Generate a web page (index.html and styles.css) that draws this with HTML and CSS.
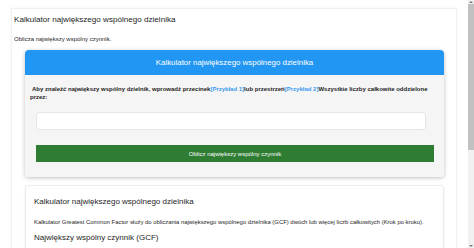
FILE: index.html
```html
<!DOCTYPE html>
<html lang="pl">
<head>
    <meta charset="UTF-8">
    <meta name="viewport" content="width=device-width, initial-scale=1.0">
    <title>Kalkulator największego wspólnego dzielnika</title>
    <link rel="stylesheet" href="styles.css">
</head>
<body>
    <div class="viewport">
        <div class="page">
            <h1 class="page-title">Kalkulator największego wspólnego dzielnika</h1>
            <p class="lead">Oblicza największy wspólny czynnik.</p>

            <div class="calc-card">
                <div class="calc-header">Kalkulator największego wspólnego dzielnika</div>
                <div class="calc-body">
                    <p class="hint">Aby znaleźć największy wspólny dzielnik, wprowadź przecinek<a href="#">[Przykład 1]</a>lub przestrzeń<a href="#">[Przykład 2]</a>Wszystkie liczby całkowite oddzielone przez:</p>
                    <input class="numbers" type="text">
                    <button class="calc-btn">Oblicz największy wspólny czynnik</button>
                </div>
            </div>

            <div class="info-card">
                <h2>Kalkulator największego wspólnego dzielnika</h2>
                <p>Kalkulator Greatest Common Factor służy do obliczania największego wspólnego dzielnika (GCF) dwóch lub więcej liczb całkowitych (Krok po kroku).</p>
                <h2>Największy wspólny czynnik (GCF)</h2>
                <p>Największy wspólny czynnik to największa liczba całkowita, która dzieli wszystkie podane liczby bez reszty.</p>
                <p>Na przykład największy wspólny czynnik liczb 12 i 18 wynosi 6.</p>
            </div>
        </div>
    </div>
    <div class="scrollbar">
        <span class="arrow up"></span>
        <span class="thumb"></span>
        <span class="arrow down"></span>
    </div>
</body>
</html>
```

FILE: styles.css
```css
* {
    margin: 0;
    padding: 0;
    box-sizing: border-box;
}

html,
body {
    height: 100%;
}

body {
    display: flex;
    overflow: hidden;
    font-family: 'Liberation Sans', Arial, sans-serif;
    background: #fff;
    color: #1e1e1e;
}

.viewport {
    flex: 1;
    overflow: hidden;
    padding: 8px 11px 8px 11px;
}

/* fake scrollbar strip */
.scrollbar {
    width: 6px;
    display: flex;
    flex-direction: column;
    align-items: center;
    background: #f1f1f1;
}

.thumb {
    width: 6px;
    height: 146px;
    background: #c1c1c1;
}

.arrow {
    width: 0;
    height: 0;
    border-left: 2px solid transparent;
    border-right: 2px solid transparent;
    margin: 1px 0;
}

.arrow.up {
    border-bottom: 2px solid #777;
}

.arrow.down {
    margin-top: auto;
    border-top: 2px solid #777;
}

.page {
    min-height: 394px;
    border: 1px solid #f0f0f0;
    box-shadow: 0 0 3px rgba(0, 0, 0, 0.05);
    padding: 5px 12px 20px 2px;
}

.page-title {
    font-size: 8.1px;
    font-weight: normal;
    line-height: 12px;
}

.lead {
    font-size: 6px;
    line-height: 8px;
    margin: 9px 0 7px;
}

.calc-card {
    margin-left: 11px;
    border-radius: 4px;
    box-shadow: 0 1px 4px rgba(0, 0, 0, 0.25);
    overflow: hidden;
}

.calc-header {
    background: #2196f3;
    color: #fff;
    text-align: center;
    font-size: 7.9px;
    height: 25px;
    line-height: 25px;
}

.calc-body {
    background: #f5f5f5;
    padding: 10px 10px 15px 5px;
}

.hint {
    font-size: 6px;
    font-weight: bold;
    line-height: 8px;
    text-indent: 2px;
}

.hint a {
    color: #3a9af0;
    text-decoration: none;
}

.numbers {
    display: block;
    width: 390px;
    height: 18px;
    margin: 11px 0 15px 6px;
    border: 1px solid #e6e6e6;
    border-radius: 3px;
    background: #fff;
}

.calc-btn {
    display: block;
    width: 398px;
    height: 17px;
    margin-left: 6px;
    border: none;
    background: #2e7d32;
    color: #fff;
    font-family: 'Liberation Sans', Arial, sans-serif;
    font-size: 6px;
}

.info-card {
    margin: 8px 0 0 11px;
    border: 1px solid #ececec;
    border-radius: 3px;
    box-shadow: 0 1px 3px rgba(0, 0, 0, 0.08);
    padding: 10px 8px 14px;
}

.info-card h2 {
    font-size: 8px;
    font-weight: normal;
    line-height: 12px;
    margin-bottom: 10px;
}

.info-card p {
    font-size: 5.9px;
    line-height: 8px;
    margin-bottom: 6px;
}

.info-card p + p {
    margin-top: -2px;
}
```
